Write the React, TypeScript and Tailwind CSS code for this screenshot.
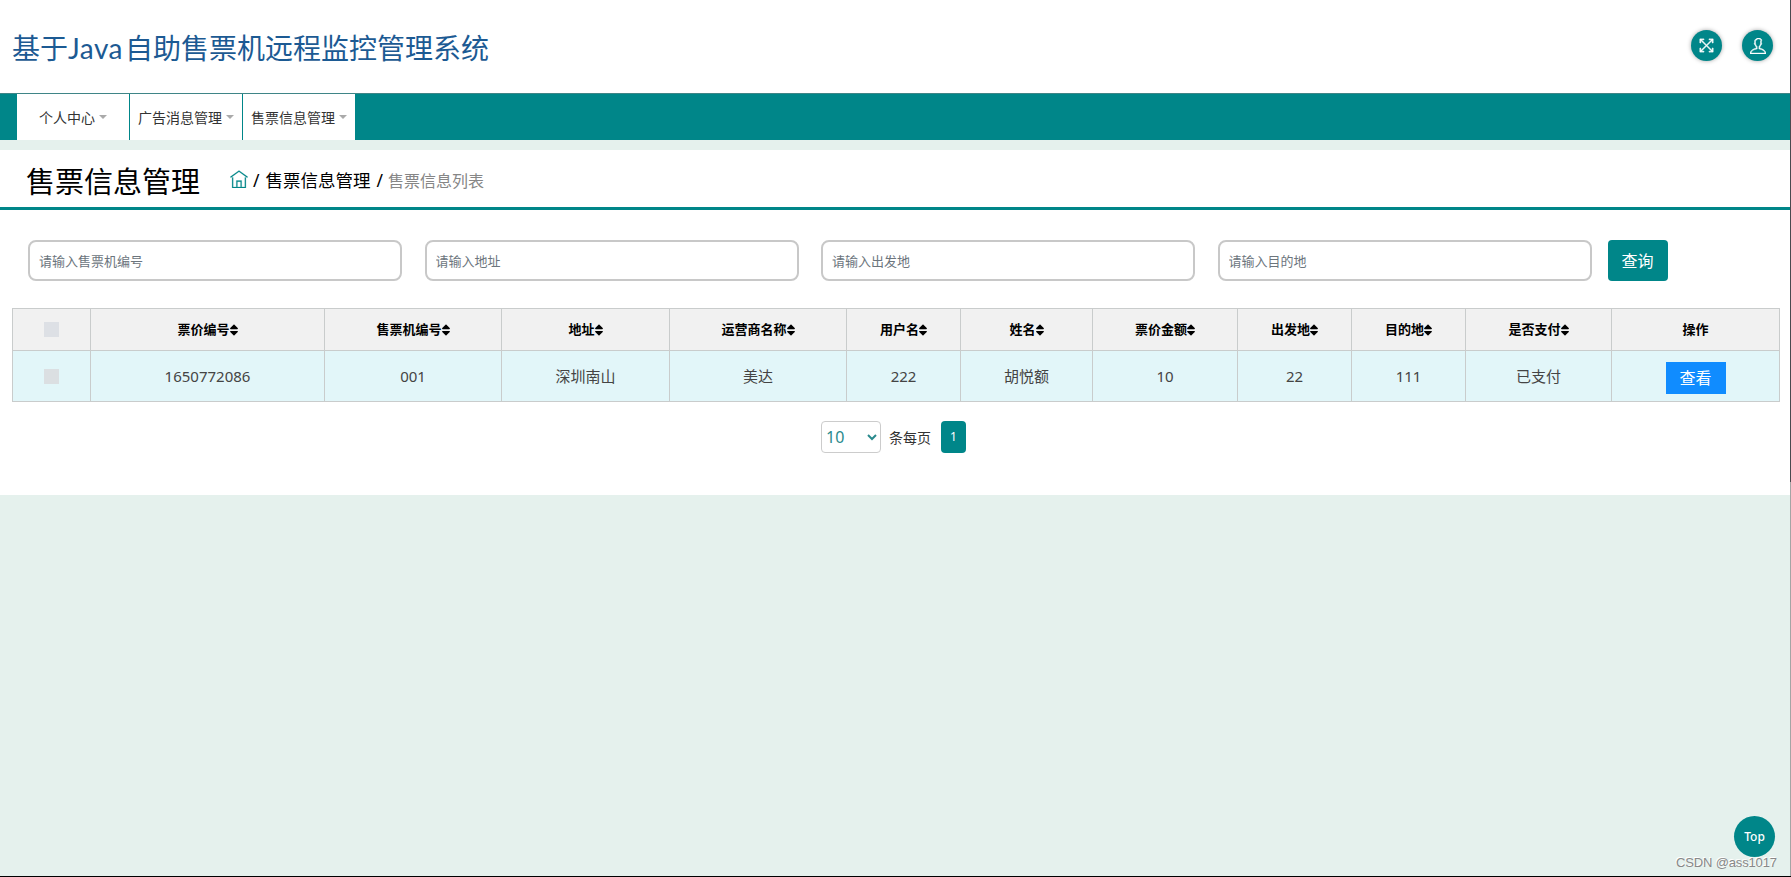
import React, { useState } from "react";
import { TfiFullscreen, TfiHome, TfiUser } from "react-icons/tfi";
import { FaSort } from "react-icons/fa";

const menus = ["个人中心", "广告消息管理", "售票信息管理"];

const filters = [
  { name: "machineNo", placeholder: "请输入售票机编号" },
  { name: "address", placeholder: "请输入地址" },
  { name: "from", placeholder: "请输入出发地" },
  { name: "to", placeholder: "请输入目的地" },
];

const columns = [
  { title: "票价编号", key: "ticketNo", width: "w-[234px]" },
  { title: "售票机编号", key: "machineNo", width: "w-[177px]" },
  { title: "地址", key: "address", width: "w-[168px]" },
  { title: "运营商名称", key: "operator", width: "w-[177px]" },
  { title: "用户名", key: "username", width: "w-[114px]" },
  { title: "姓名", key: "realName", width: "w-[132px]" },
  { title: "票价金额", key: "price", width: "w-[145px]" },
  { title: "出发地", key: "from", width: "w-[114px]" },
  { title: "目的地", key: "to", width: "w-[114px]" },
  { title: "是否支付", key: "paid", width: "w-[146px]" },
];

const rows: any[] = [
  {
    ticketNo: "1650772086",
    machineNo: "001",
    address: "深圳南山",
    operator: "美达",
    username: "222",
    realName: "胡悦额",
    price: "10",
    from: "22",
    to: "111",
    paid: "已支付",
  },
];

const Header = () => (
  <header className="flex h-[93px] items-center justify-between bg-white pl-3 pr-[18px]">
    <h1 className="flex items-baseline text-[28px] leading-none text-[#1c5a93] pt-[2px]">
      <span>基于</span>
      <span className="w-[57px] font-['Lato',sans-serif] tracking-[0.5px]">
        Java
      </span>
      <span>自助售票机远程监控管理系统</span>
    </h1>
    <div className="flex gap-5 pb-[2px]">
      <button className="flex size-[31px] items-center justify-center rounded-full bg-[#008689] text-white shadow-[0_0_4px_rgba(0,0,0,0.35)]">
        <TfiFullscreen size={15} className="stroke-current stroke-[0.7]" />
      </button>
      <button className="flex size-[31px] items-center justify-center rounded-full bg-[#008689] text-white shadow-[0_0_4px_rgba(0,0,0,0.35)]">
        <TfiUser size={16} className="stroke-current stroke-[0.5]" />
      </button>
    </div>
  </header>
);

const NavBar = () => (
  <nav className="flex h-[47px] gap-px border-t border-[#3f8587] bg-[#008689] pl-[17px]">
    {menus.map((item) => (
      <a
        key={item}
        className="flex w-28 items-center justify-center bg-white pt-0.5 text-sm text-[#333]"
      >
        <span>{item}</span>
        <span className="ml-1 mb-[3px] border-x-4 border-t-4 border-x-transparent border-t-[#aaa]"></span>
      </a>
    ))}
  </nav>
);

const Breadcrumb = () => (
  <div className="flex h-[60px] items-center border-b-3 border-[#008689] pl-[26px]">
    <h2 className="text-[29px] leading-none text-black pt-[5px]">
      售票信息管理
    </h2>
    <div className="ml-[30px] flex items-center pt-1 text-[17.5px] leading-none text-black">
      <TfiHome
        size={18}
        className="mb-1 stroke-current stroke-[0.2] text-[#008689]"
      />
      <span className="ml-[5px] mr-[6px]">/</span>
      <span>售票信息管理</span>
      <span className="ml-[6px] mr-[5px]">/</span>
      <span className="text-base leading-none text-[#868686]">售票信息列表</span>
    </div>
  </div>
);

const TicketTable = () => (
  <table className="ml-3 w-[1767px] table-fixed border-collapse text-center">
    <thead>
      <tr className="h-[42px] bg-[#f1f1f1] text-[13px] text-black">
        <th className="w-[78px] border border-[#c9cccc]">
          <span className="mx-auto block size-[15px] bg-[#dde0e5]"></span>
        </th>
        {columns.map((col) => (
          <th
            key={col.key}
            className={`border border-[#c9cccc] font-bold ${col.width}`}
          >
            <span className="flex items-center justify-center">
              {col.title}
              <FaSort size={14} className="-mx-[3px]" />
            </span>
          </th>
        ))}
        <th className="w-[168px] border border-[#c9cccc] font-bold">操作</th>
      </tr>
    </thead>
    <tbody>
      {rows.map((row) => (
        <tr
          key={row.ticketNo}
          className="h-[51px] bg-[#e2f6f9] text-[15px] text-[#444]"
        >
          <td className="border border-[#c9cccc]">
            <span className="mx-auto block size-[15px] bg-[#dbdfe2]"></span>
          </td>
          {columns.map((col) => (
            <td key={col.key} className="border border-[#c9cccc]">
              {row[col.key]}
            </td>
          ))}
          <td className="border border-[#c9cccc]">
            <button className="mt-[3px] block h-8 w-[60px] mx-auto bg-[#108cff] text-base text-white">
              查看
            </button>
          </td>
        </tr>
      ))}
    </tbody>
  </table>
);

const Pagination = () => {
  const [size, setSize] = useState("10");
  return (
    <div className="mt-[18px] flex h-[33px] items-center pl-[821px]">
      <select
        value={size}
        onChange={(e) => setSize(e.target.value)}
        className="h-8 w-[60px] rounded border border-[#ccc] bg-white text-base text-[#2a8a8d]"
      >
        <option value="10">10</option>
        <option value="20">20</option>
        <option value="50">50</option>
      </select>
      <span className="ml-2 pt-[3px] text-sm text-[#333]">条每页</span>
      <button className="ml-[10px] h-[32px] w-[25px] rounded bg-[#008689] text-xs text-white">
        1
      </button>
    </div>
  );
};

const App = () => {
  return (
    <div className="relative h-[877px] w-[1791px] overflow-hidden border-b border-b-black bg-[#e5f1ed] font-['Noto_Sans','Noto_Sans_CJK_SC',sans-serif]">
      <Header />
      <NavBar />
      <main className="mt-[10px] h-[345px] bg-white">
        <Breadcrumb />
        {/* 查询条件 */}
        <div className="mt-[30px] mb-[27px] flex h-[41px] pl-7">
          {filters.map((item) => (
            <input
              key={item.name}
              name={item.name}
              placeholder={item.placeholder}
              className="mr-[22.5px] h-full w-[374px] rounded-lg border-2 border-[#c8c8c8] px-[9px] text-[13px] placeholder:text-[#6c757d]"
            />
          ))}
          <button className="-ml-[6.5px] h-full w-[60px] rounded bg-[#008689] text-base text-white">
            查询
          </button>
        </div>
        <TicketTable />
        <Pagination />
      </main>
      <button className="absolute top-[816px] left-[1734px] size-[41px] rounded-full bg-[#008689] text-xs font-medium text-white">
        Top
      </button>
      <span className="absolute top-[855px] left-[1676px] font-['Liberation_Sans',sans-serif] text-[13px] leading-4 tracking-[-0.15px] text-[#888] [text-shadow:-1px_-1px_0_#fff]">
        CSDN @ass1017
      </span>
      {/* 右侧边线 */}
      <div className="absolute inset-y-0 right-0 w-px bg-linear-to-b from-[#4a4a4f] from-55% to-[#a3a5a5] to-55%"></div>
    </div>
  );
};

export default App;
